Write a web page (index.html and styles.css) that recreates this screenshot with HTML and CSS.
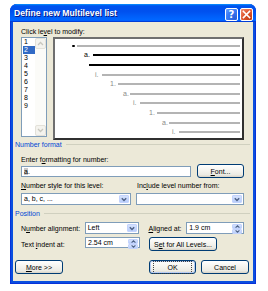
FILE: index.html
```html
<!DOCTYPE html>
<html>
<head>
<meta charset="utf-8">
<link rel="stylesheet" href="styles.css">
</head>
<body>
<div class="window">
  <div class="titlebar">
    <div class="title">Define new Multilevel list</div>
    <div class="tbtn help">?</div>
    <div class="tbtn close">
      <svg width="9" height="9" viewBox="0 0 9 9"><path d="M1.5 1.5L7.5 7.5M7.5 1.5L1.5 7.5" stroke="#fff" stroke-width="1.6" stroke-linecap="square"/></svg>
    </div>
  </div>
  <div class="client">
    <div class="label top-label">Click le<u>v</u>el to modify:</div>
    <div class="lists">
      <div class="listbox">
        <div class="items">
          <div class="item">1</div>
          <div class="item sel">2</div>
          <div class="item">3</div>
          <div class="item">4</div>
          <div class="item">5</div>
          <div class="item">6</div>
          <div class="item">7</div>
          <div class="item">8</div>
          <div class="item">9</div>
        </div>
        <div class="vscroll">
          <div class="sbtn"><svg width="7" height="5" viewBox="0 0 7 5"><path d="M1 4L3.5 1.5L6 4" fill="none" stroke="#C8C7BE" stroke-width="1.3"/></svg></div>
          <div class="strack"></div>
          <div class="sbtn"><svg width="7" height="5" viewBox="0 0 7 5"><path d="M1 1L3.5 3.5L6 1" fill="none" stroke="#C8C7BE" stroke-width="1.3"/></svg></div>
        </div>
      </div>
      <div class="preview">
        <div class="prow r1"><span class="mk"><i class="dot"></i></span><div class="ln"></div></div>
        <div class="prow r2 dark"><span class="mk">a.</span><div class="ln"></div></div>
        <div class="prow r3 dark"><div class="ln"></div></div>
        <div class="prow r4"><span class="mk">i.</span><div class="ln"></div></div>
        <div class="prow r5"><span class="mk">1.</span><div class="ln"></div></div>
        <div class="prow r6"><span class="mk">a.</span><div class="ln"></div></div>
        <div class="prow r7"><span class="mk">i.</span><div class="ln"></div></div>
        <div class="prow r8"><span class="mk">1.</span><div class="ln"></div></div>
        <div class="prow r9"><span class="mk">a.</span><div class="ln"></div></div>
        <div class="prow r10"><span class="mk">i.</span><div class="ln"></div></div>
      </div>
    </div>

    <div class="group-head head-nf"><span>Number format</span><div class="sep"></div></div>
    <div class="label lbl-enter">Enter f<u>o</u>rmatting for number:</div>
    <div class="row-input">
      <div class="textbox fmt"><span class="field">a</span>.</div>
      <div class="btn font-btn"><u>F</u>ont...</div>
    </div>
    <div class="row-labels">
      <div class="label col-a"><u>N</u>umber style for this level:</div>
      <div class="label col-b">Inc<u>l</u>ude level number from:</div>
    </div>
    <div class="row-combos">
      <div class="combo col-a">
        <span class="ctext">a, b, c, ...</span>
        <div class="carrow"><svg width="6" height="5" viewBox="0 0 6 5"><path d="M0.8 1.2L3 3.4L5.2 1.2" fill="none" stroke="#4D6185" stroke-width="1.4"/></svg></div>
      </div>
      <div class="combo col-b">
        <span class="ctext"></span>
        <div class="carrow"><svg width="6" height="5" viewBox="0 0 6 5"><path d="M0.8 1.2L3 3.4L5.2 1.2" fill="none" stroke="#4D6185" stroke-width="1.4"/></svg></div>
      </div>
    </div>

    <div class="group-head head-pos"><span>Position</span><div class="sep"></div></div>
    <div class="row-pos row-align">
      <div class="label plabel">N<u>u</u>mber alignment:</div>
      <div class="combo pfield">
        <span class="ctext">Left</span>
        <div class="carrow"><svg width="6" height="5" viewBox="0 0 6 5"><path d="M0.8 1.2L3 3.4L5.2 1.2" fill="none" stroke="#4D6185" stroke-width="1.4"/></svg></div>
      </div>
      <div class="label alabel"><u>A</u>ligned at:</div>
      <div class="spin aspin">
        <span class="ctext">1.9 cm</span>
        <div class="sarrows">
          <div class="sa"><svg width="5" height="3" viewBox="0 0 5 3"><path d="M0.6 2.6L2.5 0.8L4.4 2.6" fill="none" stroke="#4D6185" stroke-width="1.1"/></svg></div>
          <div class="sa"><svg width="5" height="3" viewBox="0 0 5 3"><path d="M0.6 0.4L2.5 2.2L4.4 0.4" fill="none" stroke="#4D6185" stroke-width="1.1"/></svg></div>
        </div>
      </div>
    </div>
    <div class="row-pos row-indent">
      <div class="label plabel">Text <u>i</u>ndent at:</div>
      <div class="spin pfield ispin">
        <span class="ctext">2.54 cm</span>
        <div class="sarrows">
          <div class="sa"><svg width="5" height="3" viewBox="0 0 5 3"><path d="M0.6 2.6L2.5 0.8L4.4 2.6" fill="none" stroke="#4D6185" stroke-width="1.1"/></svg></div>
          <div class="sa"><svg width="5" height="3" viewBox="0 0 5 3"><path d="M0.6 0.4L2.5 2.2L4.4 0.4" fill="none" stroke="#4D6185" stroke-width="1.1"/></svg></div>
        </div>
      </div>
      <div class="btn setall">S<u>e</u>t for All Levels...</div>
    </div>

    <div class="row-buttons">
      <div class="btn more"><u>M</u>ore &gt;&gt;</div>
      <div class="spacer"></div>
      <div class="btn ok"><span class="focus">OK</span></div>
      <div class="btn cancel">Cancel</div>
    </div>
  </div>
</div>
</body>
</html>
```

FILE: styles.css
```css
* { box-sizing: border-box; margin: 0; padding: 0; }
body {
  background: #fff;
  font-family: "Liberation Sans", Arial, sans-serif;
  font-size: 7px;
  color: #000;
}
u { text-decoration: underline; text-underline-offset: 1px; }

.window {
  margin: 4px 0 0 10px;
  width: 246px;
  height: 280px;
  display: flex;
  flex-direction: column;
  border-radius: 7px 7px 0 0;
  overflow: hidden;
  background: #0A4FDE;
  box-shadow: inset 0 0 0 1px #0831D9;
}
.titlebar {
  height: 18px;
  flex: none;
  display: flex;
  align-items: flex-end;
  padding: 0 3px 1px 4px;
  background: linear-gradient(180deg, #0997ff, #0053ee 10%, #0050ee 40%, #0066ff 85%, #0066ff 90%, #005bff 93%, #003dd7 96%, #003dd7);
}
.title {
  flex: 1;
  align-self: center;
  color: #fff;
  font-weight: bold;
  font-size: 8.6px;
  text-shadow: 1px 1px 0 #0a1883;
  letter-spacing: 0.05px;
}
.tbtn {
  width: 13px;
  height: 13px;
  border: 1px solid #fff;
  border-radius: 2px;
  display: flex;
  align-items: center;
  justify-content: center;
}
.help {
  background: radial-gradient(circle at 80% 85%, #2a5fd8, #3a7cf6 60%, #6ea2ff);
  color: #fff;
  font-weight: bold;
  font-size: 10px;
  margin-right: 2px;
  font-family: "DejaVu Sans", sans-serif;
}
.close {
  background: radial-gradient(circle at 80% 85%, #c23a12, #e05a33 55%, #f2937a);
}

.client {
  flex: 1;
  margin: 0 3px 3px;
  background: #ECE9D8;
  display: flex;
  flex-direction: column;
  padding: 0 9px 0 8px;
}
.label { line-height: 9px; height: 9px; white-space: nowrap; }
.top-label { margin-top: 5px; }

.lists {
  margin-top: 1px;
  height: 103px;
  display: flex;
  gap: 6px;
}
.listbox {
  width: 26px;
  height: 100px;
  background: #fff;
  border: 1px solid #7F9DB9;
  display: flex;
}
.items { flex: 1; padding-left: 1px; }
.item { height: 8px; line-height: 8px; padding-left: 1px; }
.item.sel { background: #316AC5; color: #fff; }
.vscroll {
  width: 11px;
  display: flex;
  flex-direction: column;
  background: #FBFBF8;
}
.sbtn {
  height: 11px;
  background: #F4F3EE;
  border: 1px solid #E3E1D9;
  border-radius: 2px;
  display: flex;
  align-items: center;
  justify-content: center;
}
.strack { flex: 1; }

.preview {
  flex: 1;
  height: 103px;
  background: #fff;
  border: 2px solid;
  border-color: #6f6f6f #303030 #303030 #6f6f6f;
  padding-top: 2px;
  display: flex;
  flex-direction: column;
}
.prow {
  height: 9.6px;
  display: flex;
  align-items: center;
  padding-left: var(--x);
  padding-right: 2px;
  color: #8a8a8a;
}
.prow .mk {
  width: var(--w);
  flex: none;
  line-height: 8px;
  display: flex;
  align-items: center;
}
.prow .ln { flex: 1; height: 2px; background: #B4B4B4; }
.prow.dark { color: #000; }
.prow.dark .ln { background: #000; }
.dot { display: block; width: 2.5px; height: 2.5px; background: #000; border-radius: 50%; }
.r1 { --x: 17px; --w: 5px; }
.r2 { --x: 29px; --w: 9px; }
.r3 { --x: 34px; }
.r4 { --x: 40px; --w: 7px; }
.r5 { --x: 55px; --w: 8px; }
.r6 { --x: 68px; --w: 7px; }
.r7 { --x: 78px; --w: 7px; }
.r8 { --x: 94px; --w: 8px; }
.r9 { --x: 107px; --w: 7px; }
.r10 { --x: 117px; --w: 7px; }

.group-head {
  height: 9px;
  line-height: 9px;
  display: flex;
  align-items: center;
  margin-left: -6px;
  margin-right: -6px;
  color: #0046D5;
  white-space: nowrap;
}
.group-head .sep { flex: 1; height: 1px; background: #D0D0BF; margin-left: 4px; }
.head-nf { margin-top: 0px; }
.lbl-enter { margin-top: 6px; }

.row-input {
  height: 14px;
  display: flex;
  align-items: center;
  gap: 6px;
}
.textbox {
  width: 170px;
  height: 11px;
  background: #fff;
  border: 1px solid #7F9DB9;
  line-height: 9px;
  padding-left: 2px;
}
.field { background: #C8C8C8; }
.font-btn { flex: 1; height: 14px; }

.row-labels { margin-top: 3px; height: 9px; display: flex; }
.row-labels .col-a { width: 116px; }
.row-combos { margin-top: 3px; height: 12px; display: flex; gap: 5px; }
.row-combos .col-a { width: 110px; }
.row-combos .col-b { flex: 1; }

.combo, .spin {
  height: 12px;
  background: #fff;
  border: 1px solid #7F9DB9;
  display: flex;
  align-items: stretch;
}
.ctext { flex: 1; padding-left: 2px; line-height: 10px; white-space: nowrap; }
.carrow {
  width: 10px;
  margin: 1px;
  border-radius: 1px;
  background: linear-gradient(#D6E2FD, #B9CEFA);
  border: 1px solid #C3D3FD;
  display: flex;
  align-items: center;
  justify-content: center;
}
.sarrows { width: 10px; margin: 1px; display: flex; flex-direction: column; gap: 0; }
.sa {
  flex: 1;
  border-radius: 1px;
  background: linear-gradient(#D6E2FD, #B9CEFA);
  border: 1px solid #C3D3FD;
  display: flex;
  align-items: center;
  justify-content: center;
}

.head-pos { margin-top: 4px; }
.row-pos { display: flex; align-items: center; }
.row-align { margin-top: 4px; height: 12px; }
.row-indent { margin-top: 3px; height: 14px; }
.plabel { width: 64px; }
.pfield { width: 55px; }
.row-indent .spin { height: 11px; align-self: flex-start; }
.alabel { margin-left: 9px; width: 38px; }
.aspin { width: 58px; }
.setall { margin-left: 9px; width: 68px; height: 14px; }

.btn {
  border: 1px solid #003C74;
  border-radius: 3px;
  background: linear-gradient(#FFFFFF, #F5F4EF 45%, #ECEBE4 80%, #D8D3C6);
  display: flex;
  align-items: center;
  justify-content: center;
  white-space: nowrap;
  line-height: 9px;
}
.row-buttons {
  margin-top: 9px;
  height: 14px;
  display: flex;
  margin-left: -6px;
  margin-right: -5px;
}
.more { width: 48px; }
.spacer { flex: 1; }
.ok {
  width: 47px;
  margin-right: 5px;
  box-shadow: inset 0 0 0 1px #B7CCF3;
}
.ok .focus { outline: 1px dotted #444; outline-offset: 1px; padding: 0 12px; }
.cancel { width: 48px; }
```
